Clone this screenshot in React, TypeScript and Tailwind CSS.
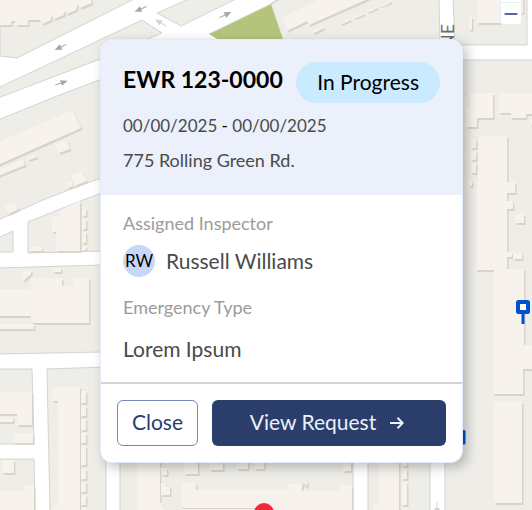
import { Minus } from 'lucide-react'

const BLOCKS = [
  '0,-2 136,-2 17,58 0,56',
  '-2,88 142,20 162,33 100,59 53,77 -2,98',
  '157,13 181,26 238,-2 191,-2',
  '280,-2 270,4 284,46 440,46 439,-2',
  '453,-2 455,45 527,45 527,-2',
  '445,60 534,60 534,512 445,512',
  '-2,120 57,96 102,79 102,178 84,184 43,200 -2,220',
  '28,222 83,200 102,193 102,251 28,253',
  '-2,238 13,231 13,252 -2,252',
  '-2,268 102,265 102,352 -2,354',
  '-2,369 32,369 34,444 -2,444',
  '-2,459 34,459 35,512 -2,512',
  '47,369 106,367 106,512 50,512',
  '120,440 353,440 353,512 120,512',
  '368,440 430,440 430,512 368,512',
]

const BUILDINGS = [
  '-2,-2 91,-2 92,3 80,8 78,5 76,10 67,14 65,11 64,15 54,19 52,15 51,20 42,24 40,20 28,20 28,25 16,25 15,21 11,21 11,25 -2,25',
  '-2,142 73,110 81,128 -2,165',
  '55,145 67,140 70,149 59,153',
  '27,158 35,154 37,157 29,160',
  '-2,171 23,159 25,165 -2,176',
  '72,175 82,171 87,181 74,186',
  '66,183 71,181 73,186 68,188',
  '5,206 15,202 19,209 8,214',
  '60,210 80,201 80,251 56,251 56,232 52,232 52,217 60,217',
  '82,209 86,209 86,216 82,216',
  '82,219 86,219 86,229 82,229',
  '82,232 86,232 86,243 82,243',
  '82,246 86,246 86,250 82,250',
  '29,247 42,247 42,251 29,251',
  '23,270 31,270 31,274 23,281',
  '53,268 61,268 61,272 53,272',
  '-2,289 31,289 31,278 62,278 62,286 73,286 73,278 89,278 89,323 31,323 31,316 -2,316',
  '-2,324 34,324 34,329 -2,329',
  '-2,392 32,392 32,425 17,425 17,414 -2,414',
  '-2,417 13,417 13,422 -2,422',
  '14,433 33,433 33,443 14,443',
  '2,460 14,460 14,473 2,473',
  '-2,491 24,491 24,485 34,485 34,512 -2,512',
  '52,387 80,387 80,512 52,512 52,505 58,505 58,401 52,401',
  '81,391 86,391 86,403 81,403',
  '81,406 86,406 86,416 81,416',
  '81,419 86,419 86,430 81,430',
  '81,433 86,433 86,443 81,443',
  '81,446 86,446 86,465 81,465',
  '81,469 86,469 86,479 81,479',
  '81,482 86,482 86,492 81,492',
  '81,495 86,495 86,505 81,505',
  '81,508 86,508 86,512 81,512',
  '137,450 160,450 160,502 167,512 137,512',
  '160,468 167,468 167,475 162,475',
  '161,483 166,483 166,486 170,486 170,495 161,495',
  '184,455 198,455 198,474 184,474',
  '210,455 223,455 223,470 210,470',
  '237,455 248,455 248,469 237,469',
  '255,455 264,455 264,469 255,469',
  '343,455 351,455 351,471 343,471',
  '182,483 196,483 196,490 288,490 288,484 302,484 302,491 340,491 340,485 352,485 352,512 182,512',
  '379,450 399,450 399,512 373,512 373,504 379,504',
  '402,455 407,455 407,466 402,466',
  '402,469 407,469 407,479 402,479',
  '402,482 407,482 407,505 402,505',
  '402,508 407,508 407,512 402,512',
  '470,93 493,93 493,118 477,118 477,127 466,127 466,108 470,108',
  '499,93 534,93 534,114 526,114 526,118 511,118 511,113 499,113',
  '530,117 534,117 534,125 530,125',
  '471,139 476,139 476,148 471,148',
  '471,151 476,151 476,160 471,160',
  '471,163 476,163 476,173 471,173',
  '469,178 472,182 472,186 469,186',
  '479,136 507,136 507,182 515,182 515,193 507,193 507,201 513,201 513,209 507,209 507,269 524,269 524,345 534,345 534,369 523,369 523,394 493,394 494,270 476,270 477,190',
  '515,214 524,214 524,223 515,223',
  '507,252 512,252 512,257 507,257',
  '513,253 522,253 522,259 513,259',
  '494,402 522,402 522,503 494,503',
  '283,17 322,-2 370,-2 309,25 307,21 287,31',
  '312,31 323,26 324,28 314,33',
  '339,21 342,22 349,18 350,20 341,24',
  '353,15 356,16 363,12 364,14 355,18',
  '366,9 369,10 376,6 377,8 368,12',
  '379,4 382,5 390,0 391,2 381,6',
  '477,-2 523,-2 523,13 500,13 500,23 477,23',
  '469,17 472,17 472,30 469,30',
]

// centre and heading of each one-way arrow
const ARROWS = [
  { x: 141, y: 9, angle: 156, color: '#a6a6a6' },
  { x: 161, y: 23, angle: 212, color: '#d4d4d4' },
  { x: 225, y: 15, angle: -26, color: '#a6a6a6' },
  { x: 61, y: 47, angle: 154, color: '#a6a6a6' },
  { x: 61, y: 83, angle: -19, color: '#a6a6a6' },
  { x: 437, y: 508, angle: 90, color: '#d4d4d4' },
]

function MapBackground() {
  return (
    <svg
      viewBox="0 0 532 510"
      preserveAspectRatio="xMidYMid slice"
      className="absolute inset-0 w-full h-full"
      aria-hidden="true"
    >
      <rect width="532" height="510" fill="#ffffff" />
      <g fill="#eeede8" stroke="#d3d3d1" strokeWidth="1">
        {BLOCKS.map((points) => (
          <polygon key={points} points={points} />
        ))}
      </g>
      <polygon points="209,34 271,4 286,48 232,48" fill="#b4c57b" />
      <path d="M209 34L271 4L280 -1" stroke="#d3d3d1" fill="none" />
      {BUILDINGS.map((points) => (
        <g key={points}>
          <polygon points={points} fill="#d9d4c9" transform="translate(1.500 2)" />
          <polygon points={points} fill="#f7f2ec" />
        </g>
      ))}
      <path d="M303 489V484L308 488V483" stroke="#d9d4c9" strokeWidth="1.5" fill="none" />
      <path d="M182 508.500H260" stroke="#d9d4c9" fill="none" />
      {ARROWS.map((a) => (
        <g key={`${a.x}-${a.y}`} transform={`translate(${a.x} ${a.y}) rotate(${a.angle})`}>
          <path d="M-6 0H3" stroke={a.color} strokeWidth="1" />
          <path d="M0 -3L7 0L0 3Z" fill={a.color} />
        </g>
      ))}
      <text
        transform="translate(454 48) rotate(-90)"
        fontSize="18"
        fontFamily="Lato, sans-serif"
        fill="#6b6b6b"
      >
        NE
      </text>
      <path d="M523 313V324" stroke="#0052cc" strokeWidth="3" />
      <rect x="518" y="302" width="10" height="10" rx="0.5" fill="#ffffff" stroke="#0052cc" strokeWidth="4" strokeLinejoin="round" />
      <rect x="452" y="430" width="13.500" height="14.500" rx="1.500" fill="#0052cc" />
      <circle cx="264" cy="513" r="10" fill="#f52735" />
    </svg>
  )
}

function RequestCard() {
  return (
    <article className="relative w-full max-w-md overflow-hidden rounded-xl border border-[#e1ecfd] bg-white shadow-[4px_4px_12px_rgba(0,0,0,0.25)]">
      <header className="bg-[#ebf0fa] px-[22px] pt-[22px] pb-[18px] text-[#4a4a4a]">
        <div className="flex items-start justify-between gap-2 mb-1.5 text-black">
          <h2 className="text-[23px] leading-[34px] font-bold whitespace-nowrap">EWR 123-0000</h2>
          <span className="rounded-full bg-[#c9eaff] px-[21px] pt-[3px] pb-[5px] text-[21px] leading-[33px] whitespace-nowrap">
            In Progress
          </span>
        </div>
        <p className="text-[17px] leading-[34px]">
          00/00/2025 <span className="text-black">-</span> 00/00/2025
        </p>
        <p className="text-lg leading-[34px]">775 Rolling Green Rd.</p>
      </header>
      <dl className="px-[22px] pt-[14px] pb-[19px] text-[21px] leading-7 text-[#4a4a4a]">
        <dt className="text-lg leading-7 text-[#9b9b9b]">Assigned Inspector</dt>
        <dd className="mt-2 flex items-center gap-[11px]">
          <span className="flex size-8 items-center justify-center rounded-full bg-[#c7d7f9] text-[17px] text-black">
            RW
          </span>
          Russell Williams
        </dd>
        <dt className="mt-4 text-lg leading-7 text-[#9b9b9b]">Emergency Type</dt>
        <dd className="mt-3.5">Lorem Ipsum</dd>
      </dl>
      <footer className="flex gap-3.5 border-t-2 border-[#d2d2d2] p-4 text-[21px]">
        <button type="button" className="h-[46px] w-[81px] rounded-md border border-[#7388b8] bg-white pb-0.5 text-[#2a3d6b]">
          Close
        </button>
        <button
          type="button"
          className="flex h-[46px] flex-1 items-center justify-center gap-3.5 rounded-md bg-[#2a3d6b] pr-1 text-[#ebf0fa]"
        >
          <span className="pb-0.5">View Request</span>
          <svg viewBox="0 0 14 12" className="h-3 w-3.5" fill="none" stroke="currentColor" strokeWidth="2" aria-hidden="true">
            <path d="M0 6H12.500M7.500 0.800L12.700 6L7.500 11.200" />
          </svg>
        </button>
      </footer>
    </article>
  )
}

export default function App() {
  return (
    <main className="relative min-h-screen overflow-hidden pt-[39px] pr-[69px] pb-[46px] pl-[100px] font-[Lato,sans-serif]">
      <MapBackground />
      <div className="absolute top-0 right-2.5 rounded-b border border-t-0 border-[#e6eef8] bg-white pt-0.5">
        <button
          type="button"
          aria-label="Zoom out"
          className="flex h-[22px] w-5 items-center justify-center border-t border-[#e6eef8] text-[#1f3a7a]"
        >
          <Minus className="size-5" strokeWidth={2} />
        </button>
      </div>
      <RequestCard />
    </main>
  )
}
